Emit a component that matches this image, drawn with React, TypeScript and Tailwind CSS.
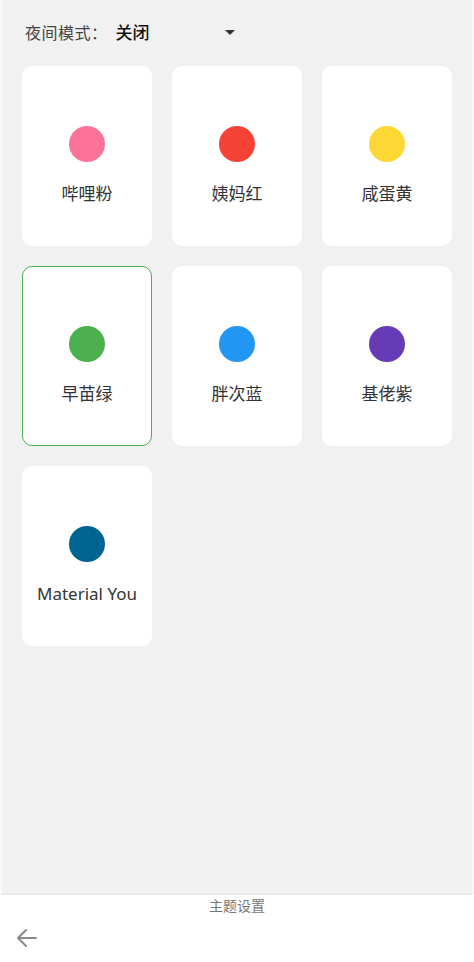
import React from "react";

const themes = [
  { name: "哔哩粉", color: "#fb7299" },
  { name: "姨妈红", color: "#f44336" },
  { name: "咸蛋黄", color: "#fdd835" },
  { name: "早苗绿", color: "#4caf50", selected: true },
  { name: "胖次蓝", color: "#2196f3" },
  { name: "基佬紫", color: "#673ab7" },
  { name: "Material You", color: "#006493" },
];

export default function App() {
  return (
    <div
      className="w-[474px] h-[962px] flex flex-col bg-white overflow-hidden"
      style={{ fontFamily: '"Noto Sans", "Noto Sans CJK SC", sans-serif' }}
    >
      <div className="flex-1 bg-[#f8f8f8] px-[2px] flex flex-col">
        <div className="flex-1 bg-[#f1f1f1] flex flex-col border-b-2 border-[#e9e9e9]">
          <div className="h-[66px] flex items-center pl-[23px] pb-[1px]">
            <span className="text-[16px] text-[#444] tracking-[0.5px]">夜间模式：</span>
            <span className="ml-[8px] text-[17px] font-medium text-[#111]">关闭</span>
            <span className="ml-[75px] w-0 h-0 border-l-[5px] border-r-[5px] border-t-[5px] border-l-transparent border-r-transparent border-t-[#333]" />
          </div>
          <div className="grid grid-cols-[130px_130px_130px] gap-[20px] pl-[20px]">
            {themes.map((t) => (
              <div
                key={t.name}
                className={`h-[180px] rounded-[10px] bg-white flex flex-col items-center ${
                  t.selected ? "border-[1.5px] border-[#4caf50]" : ""
                }`}
              >
                <div
                  className={`w-[36px] h-[36px] rounded-full ${t.selected ? "mt-[58.5px]" : "mt-[60px]"}`}
                  style={{ backgroundColor: t.color }}
                />
                <div className="mt-[21px] text-[17px] leading-[22px] text-[#333]">{t.name}</div>
              </div>
            ))}
          </div>
        </div>
      </div>
      <div className="h-[67px] bg-white flex flex-col">
        <div className="text-center text-[14px] leading-[18px] text-[#777] mt-[2px]">主题设置</div>
        <div className="pl-[16px] mt-[12px]">
          <svg width="22" height="22" viewBox="0 0 22 22" fill="none" stroke="#8a8a8a" strokeWidth="2" strokeLinecap="round" strokeLinejoin="round">
            <path d="M20 11H2M10 3L2 11L10 19" />
          </svg>
        </div>
      </div>
    </div>
  );
}
